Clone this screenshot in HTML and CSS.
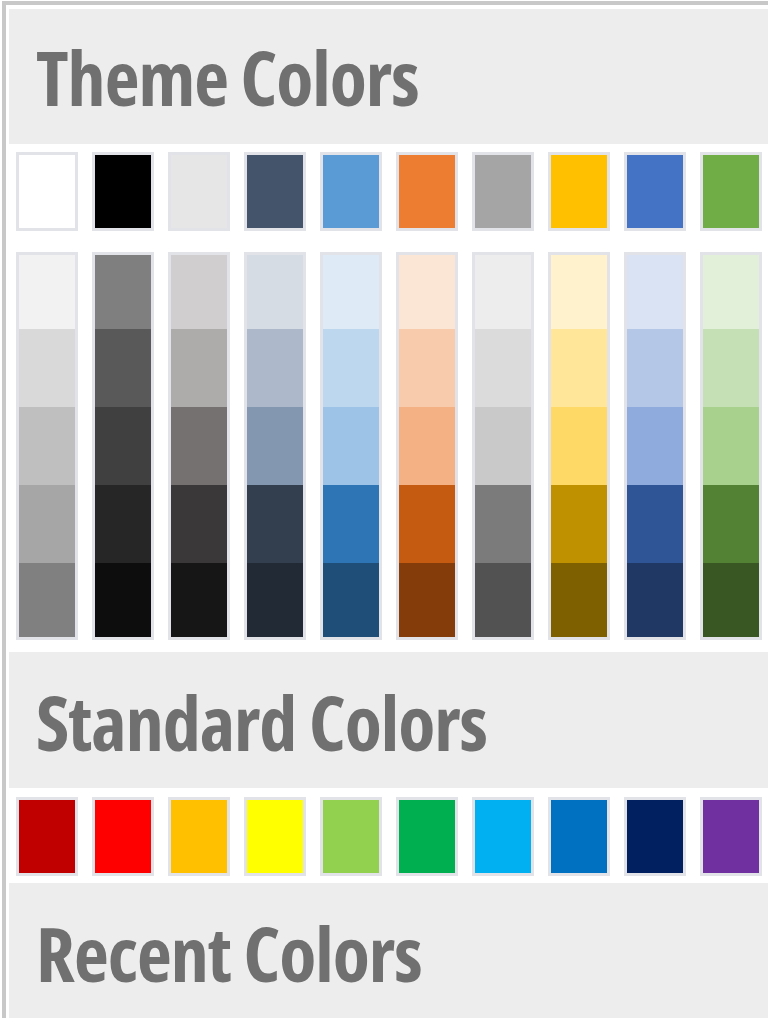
FILE: index.html
```html
<!DOCTYPE html>
<html lang="en">
<head>
    <meta charset="UTF-8">
    <meta name="viewport" content="width=device-width, initial-scale=1.0">
    <title>Colors</title>
    <link rel="stylesheet" href="styles.css">
</head>
<body>
    <div class="picker">
        <div class="section-title">Theme Colors</div>
        <div class="swatch-row" id="themeRow"></div>
        <div class="shade-grid" id="shadeGrid"></div>
        <div class="section-title standard-title">Standard Colors</div>
        <div class="swatch-row" id="standardRow"></div>
        <div class="section-title recent-title">Recent Colors</div>
    </div>

    <script>
        const themeColors = ['#ffffff', '#000000', '#e7e6e6', '#44546a', '#5b9bd5', '#ed7d31', '#a5a5a5', '#ffc000', '#4472c4', '#70ad47'];
        const shades = [
            ['#f2f2f2', '#d9d9d9', '#bfbfbf', '#a6a6a6', '#808080'],
            ['#7f7f7f', '#595959', '#404040', '#262626', '#0d0d0d'],
            ['#d0cece', '#aeabab', '#757171', '#3a3838', '#171616'],
            ['#d6dce4', '#adb9ca', '#8497b0', '#333f4f', '#222a35'],
            ['#deebf6', '#bdd7ee', '#9dc3e6', '#2e75b5', '#1f4e79'],
            ['#fbe5d5', '#f7cbac', '#f4b183', '#c55a11', '#843c0b'],
            ['#ededed', '#dbdbdb', '#c9c9c9', '#7b7b7b', '#525252'],
            ['#fff2cc', '#ffe699', '#ffd966', '#bf9000', '#7f6000'],
            ['#dae3f3', '#b4c7e7', '#8faadc', '#2f5597', '#203864'],
            ['#e2f0d9', '#c5e0b4', '#a9d18e', '#548235', '#385723']
        ];
        const standardColors = ['#c00000', '#ff0000', '#ffc000', '#ffff00', '#92d050', '#00b050', '#00b0f0', '#0070c0', '#002060', '#7030a0'];

        function fillRow(row, colors) {
            colors.forEach(color => {
                const swatch = document.createElement('div');
                swatch.className = 'swatch';
                swatch.style.backgroundColor = color;
                swatch.title = color;
                row.appendChild(swatch);
            });
        }

        fillRow(document.getElementById('themeRow'), themeColors);
        fillRow(document.getElementById('standardRow'), standardColors);

        const shadeGrid = document.getElementById('shadeGrid');
        shades.forEach(column => {
            const col = document.createElement('div');
            col.className = 'shade-col';
            column.forEach(color => {
                const shade = document.createElement('div');
                shade.className = 'shade';
                shade.style.backgroundColor = color;
                shade.title = color;
                col.appendChild(shade);
            });
            shadeGrid.appendChild(col);
        });
    </script>
</body>
</html>
```

FILE: styles.css
```css
body {
    margin: 0;
    height: 1024px;
    background-color: #fff;
    font-family: 'Open Sans', 'Liberation Sans', sans-serif;
    overflow: hidden;
}
.picker {
    margin: 1px 0 0 2px;
    border-top: 4px solid #c8c8c8;
    border-left: 4px solid #c8c8c8;
    padding: 4px 0 0 3px;
}
.section-title {
    height: 135px;
    padding: 30px 0 0 27px;
    box-sizing: border-box;
    background-color: #ededed;
    font-size: 76px;
    font-weight: 700;
    font-stretch: 75%;
    letter-spacing: -1px;
    line-height: 76px;
    color: #707070;
}
.standard-title {
    height: 136px;
    padding-top: 32px;
    margin-top: 12px;
}
.recent-title {
    padding-top: 32px;
    margin-top: 7px;
}
.swatch-row {
    display: grid;
    grid-template-columns: repeat(10, 62px);
    gap: 14px;
    padding-left: 7px;
    margin-top: 8px;
}
#standardRow {
    margin-top: 9px;
}
.swatch {
    height: 79px;
    border: 3px solid #e2e3e8;
    box-sizing: border-box;
}
.shade-grid {
    display: grid;
    grid-template-columns: repeat(10, 62px);
    gap: 14px;
    padding-left: 7px;
    margin-top: 21px;
}
.shade-col {
    display: flex;
    flex-direction: column;
    border: 3px solid #e2e3e8;
}
.shade {
    height: 78px;
}
.shade:first-child,
.shade:last-child {
    height: 74px;
}
```
